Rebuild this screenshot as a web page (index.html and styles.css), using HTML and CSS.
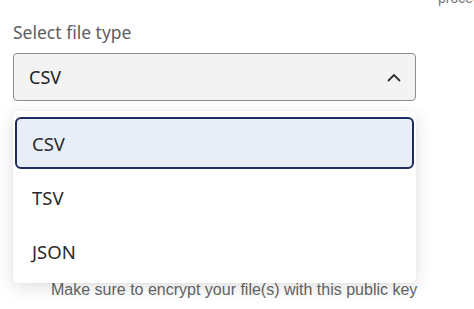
FILE: index.html
```html
<!DOCTYPE html>
<html>
<head>
<meta charset="utf-8">
<link rel="stylesheet" href="styles.css">
</head>
<body>
<div class="top"><span>proceed</span></div>
<div class="field">
  <div class="label">Select file type</div>
  <div class="select">
    <span class="value">CSV</span>
    <svg class="chev" width="14" height="9" viewBox="0 0 14 9"><path d="M1.5 7.5 L7 2 L12.5 7.5" fill="none" stroke="#333" stroke-width="1.8" stroke-linecap="round" stroke-linejoin="round"/></svg>
  </div>
  <div class="menu">
    <div class="option active"><span>CSV</span></div>
    <div class="option"><span>TSV</span></div>
    <div class="option"><span>JSON</span></div>
  </div>
  <p class="note">Make sure to encrypt your file(s) with this public key</p>
</div>
</body>
</html>
```
FILE: styles.css
```css
html, body {
  margin: 0;
  padding: 0;
  background: #ffffff;
  overflow: hidden;
}
body {
  font-family: "Noto Sans", "Open Sans", sans-serif;
  width: 474px;
  height: 309px;
}
.top {
  height: 6px;
  overflow: hidden;
}
.top span {
  display: block;
  margin-left: 438px;
  margin-top: -9px;
  font-family: "Liberation Sans", sans-serif;
  font-size: 14px;
  line-height: 14px;
  color: #777;
  white-space: nowrap;
}
.field {
  position: relative;
  margin-left: 13px;
  width: 403px;
}
.label {
  margin-top: 14px;
  font-size: 17.5px;
  line-height: 24px;
  color: #5e5e5e;
}
.select {
  margin-top: 9px;
  box-sizing: border-box;
  height: 48px;
  border: 1px solid #8e8e8e;
  border-radius: 4px;
  background: #f3f3f3;
  display: flex;
  align-items: center;
  justify-content: space-between;
  padding: 0 14px 0 15px;
}
.value {
  font-size: 18px;
  color: #222;
}
.chev {
  display: block;
}
.menu {
  position: absolute;
  left: 0;
  right: 0;
  top: 91px;
  background: #fff;
  border-radius: 5px;
  padding: 5px 1px;
  box-shadow: 0 4px 18px rgba(0,0,0,0.13), 0 0 2px rgba(0,0,0,0.06);
  z-index: 2;
}
.option {
  height: 54px;
  padding: 1px;
  box-sizing: border-box;
  display: flex;
}
.option span {
  flex: 1;
  display: flex;
  align-items: center;
  padding-left: 15px;
  font-size: 18.5px;
  color: #2b2b2b;
  border: 2px solid transparent;
  border-radius: 6px;
}
.option.active span {
  border-color: #1e2c5d;
  background: #e8eef8;
}
.note {
  margin: 180px 0 0 38px;
  font-family: "Liberation Sans", sans-serif;
  font-size: 16px;
  line-height: 18px;
  color: #666;
  white-space: nowrap;
}
```
